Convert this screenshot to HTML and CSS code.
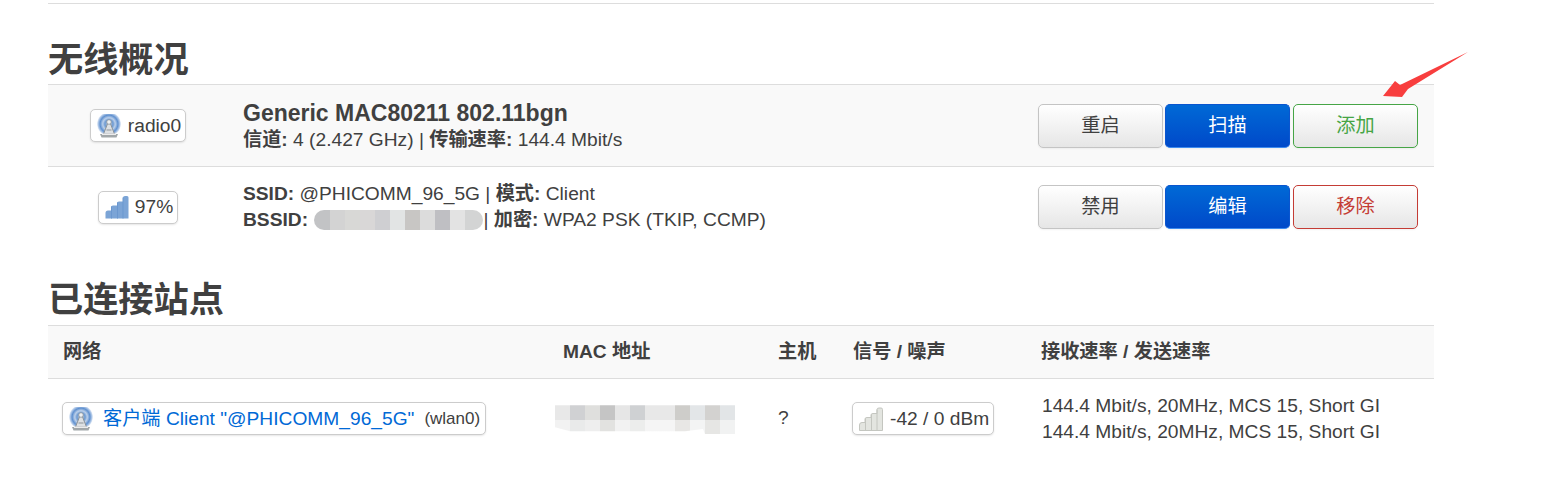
FILE: index.html
```html
<!DOCTYPE html>
<html lang="zh">
<head>
<meta charset="utf-8">
<title>无线概况</title>
<link rel="stylesheet" href="styles.css">
</head>
<body>
<svg class="defs" width="0" height="0" aria-hidden="true">
  <defs>
    <radialGradient id="waves" cx="50%" cy="50%" r="50%">
      <stop offset="0" stop-color="#cfdcee"/>
      <stop offset=".34" stop-color="#6d9ad2"/>
      <stop offset=".52" stop-color="#bcd0ea"/>
      <stop offset=".74" stop-color="#5f90cf"/>
      <stop offset=".9" stop-color="#b0c8e8"/>
      <stop offset="1" stop-color="#b0c8e8" stop-opacity=".2"/>
    </radialGradient>
    <symbol id="radio" viewBox="0 0 24 24">
      <circle cx="12" cy="10" r="12" fill="url(#waves)"/>
      <path d="M12 6 L17.500 20 H6.500 Z" fill="#dde0e3" stroke="#8d9398" stroke-width="1"/>
      <circle cx="12" cy="8" r="2.300" fill="#eef0f2" stroke="#8d9398" stroke-width=".8"/>
      <path d="M9.500 16 H14.500" stroke="#8d9398" stroke-width="1"/>
      <path d="M3 20 H21 L19.500 23.500 H4.500 Z" fill="#a2a7a9"/>
      <rect x="5" y="19.500" width="14" height="1.500" fill="#ececec"/>
    </symbol>
    <symbol id="bars" viewBox="0 0 24 23">
      <path d="M.5 23 V17.500 Q.5 15 3 15 H6 V11.500 Q6 10 8 10 H12 V7.500 Q12 6 14 6 H18 V2 Q18 .5 20 .5 H22 Q23.500 .5 23.500 2 V23 Z"/>
      <path d="M6.500 23 V11 M12.500 23 V7 M18 23 V2" fill="none" stroke="currentColor" stroke-width="1"/>
    </symbol>
  </defs>
</svg>

<main class="page">
  <h2 class="title title-first">无线概况</h2>
  <table class="grid">
    <tr class="row-device">
      <td class="cell-badge">
        <span class="badge"><svg class="ico"><use href="#radio"/></svg>radio0</span>
      </td>
      <td class="cell-info">
        <div class="device">Generic MAC80211 802.11bgn</div>
        <div><b>信道:</b> 4 (2.427 GHz) | <b>传输速率:</b> 144.4 Mbit/s</div>
      </td>
      <td class="cell-actions">
        <div class="actions">
          <button class="btn">重启</button>
          <button class="btn btn-primary">扫描</button>
          <button class="btn btn-add">添加</button>
        </div>
      </td>
    </tr>
    <tr class="row-net">
      <td class="cell-badge">
        <span class="badge"><svg class="ico ico-blue"><use href="#bars"/></svg>97%</span>
      </td>
      <td class="cell-info">
        <div><b>SSID:</b> @PHICOMM_96_5G | <b>模式:</b> Client</div>
        <div><b>BSSID:</b> <span class="blur blur-bssid"></span>| <b>加密:</b> WPA2 PSK (TKIP, CCMP)</div>
      </td>
      <td class="cell-actions">
        <div class="actions">
          <button class="btn">禁用</button>
          <button class="btn btn-primary">编辑</button>
          <button class="btn btn-remove">移除</button>
        </div>
      </td>
    </tr>
  </table>

  <h2 class="title">已连接站点</h2>
  <table class="grid grid-stations">
    <tr class="row-th">
      <th class="c-net">网络</th>
      <th class="c-mac">MAC 地址</th>
      <th class="c-host">主机</th>
      <th class="c-sig">信号 / 噪声</th>
      <th>接收速率 / 发送速率</th>
    </tr>
    <tr class="row-station">
      <td>
        <span class="badge badge-wide"><svg class="ico"><use href="#radio"/></svg><a class="link">客户端 Client "@PHICOMM_96_5G"</a><small class="iface">(wlan0)</small></span>
      </td>
      <td><span class="blur blur-mac"></span></td>
      <td class="host">?</td>
      <td><span class="badge"><svg class="ico ico-gray"><use href="#bars"/></svg>-42 / 0 dBm</span></td>
      <td class="rates">144.4 Mbit/s, 20MHz, MCS 15, Short GI<br>144.4 Mbit/s, 20MHz, MCS 15, Short GI</td>
    </tr>
  </table>
</main>

<svg class="arrow" viewBox="0 0 90 48" aria-hidden="true">
  <polygon points="85,0 25,37 19,45 0,44 12,29 17,33" fill="#f83e3e"/>
</svg>
</body>
</html>
```
FILE: styles.css
```css
* { box-sizing: border-box; }
html, body { margin: 0; background: #fff; }
body {
  position: relative;
  height: 483px;
  overflow: hidden;
  font-family: "Liberation Sans", "Noto Sans CJK SC", sans-serif;
  font-size: 19.2px;
  line-height: 26px;
  color: #404040;
}
.defs { position: absolute; }
.page {
  width: 1386px;
  margin-left: 48px;
  padding-top: 3px;
}
.page::before {
  content: "";
  display: block;
  height: 1px;
  background: #ddd;
}
.title {
  height: 49px;
  margin: 28px 0 0;
  font-size: 35.2px;
  line-height: 47px;
  font-weight: 700;
  color: #404040;
}
.title-first { height: 49px; margin-top: 31px; line-height: 49px; }
.grid {
  width: 100%;
  border-collapse: collapse;
  table-layout: fixed;
  border-top: 1px solid #ddd;
}
.grid td { padding: 0; vertical-align: middle; }
.row-device { height: 82px; background: #f9f9f9; border-bottom: 1px solid #ddd; }
.row-net { height: 81px; }
.grid .cell-badge { width: 184px; text-align: center; padding-right: 4px; }
.grid .cell-info { padding-left: 11px; }
.cell-actions { width: 416px; }
.device { font-size: 23px; font-weight: 700; line-height: 28px; }
.actions { display: flex; gap: 2px; padding-left: 20px; }
.btn {
  width: 125px;
  height: 44px;
  padding: 0;
  border: 1px solid #c4c4c4;
  border-radius: 5px;
  background: linear-gradient(#fff, #e6e6e6);
  box-shadow: 0 1px 2px rgba(0,0,0,.05);
  font: inherit;
  color: #404040;
}
.btn-primary {
  color: #fff;
  border-color: #0a55cf #0a55cf #3d8bef;
  background: linear-gradient(#0069d6, #0049c9);
}
.btn-add { color: #46a546; border-color: #46a546; margin-left: 1px; }
.btn-remove { color: #c43c35; border-color: #c43c35; margin-left: 1px; }
.badge {
  display: inline-flex;
  align-items: center;
  height: 33px;
  padding: 0 4px 0 6px;
  border: 1px solid #ccc;
  border-radius: 5px;
  background: #fff;
  box-shadow: 0 1px 2px rgba(0,0,0,.1);
  white-space: nowrap;
  vertical-align: middle;
}
.ico { width: 24px; height: 24px; margin-right: 7px; flex: none; }
.ico-blue { fill: #7ba4d6; color: #6b97cf; margin-right: 6px; }
.ico-gray { fill: #e3e5e0; color: #c4c6c0; stroke: #c4c6c0; margin-right: 7px; }
.blur { display: inline-block; vertical-align: middle; }
.blur-bssid {
  width: 169px;
  height: 20px;
  border-radius: 10px;
  margin: -2px 0 0 1px;
  background: linear-gradient(90deg,
    #c2c3c5 0 16px, #d3d3d3 16px 31px, #d8d8d6 31px 46px, #d9d7d7 46px 61px,
    #cfcfd2 61px 76px, #e2e4e4 76px 91px, #c8c6c4 91px 106px, #dcdcdc 106px 121px,
    #bfbfc3 121px 136px, #e3e3e3 136px 151px, #d3d4d4 151px 169px);
}
.row-th { height: 53px; background: #f9f9f9; border-bottom: 1px solid #ddd; }
.row-th th { padding: 0 0 0 15px; text-align: left; font-weight: 700; }
.c-net { width: 500px; }
.c-mac { width: 215px; }
.c-host { width: 75px; }
.c-sig { width: 188px; }
.row-station { height: 79px; }
.grid-stations td { padding-left: 14px; }
.grid-stations .host { padding-left: 15px; }
.grid-stations .rates { padding: 2px 0 0 16px; }
.grid-stations .badge { margin-top: 2px; }
.badge-wide .ico { margin-right: 10px; }
.badge-wide { padding-right: 5px; }
.link { color: #0069d6; }
.iface { font-size: 17px; margin-left: 10px; }
.blur-mac {
  width: 180px;
  height: 29px;
  margin: 4px 0 0 -7px;
  clip-path: polygon(0 0, 100% 0, 100% 100%, 150px 100%, 148px 82%, 130px 90%, 15px 90%, 0 76%);
  background:
    linear-gradient(90deg,
      #e8e8e8 0 15px, #d0d1d3 15px 30px, #dfdfdd 30px 45px, #c5c5c5 45px 60px,
      #e6e6e6 60px 75px, #cfd1d3 75px 90px, #e8e8e8 90px 120px, #cecdca 120px 135px,
      #e3e6e8 135px 150px, #d3d2d0 150px 165px, #e2e5e7 165px 180px) top / 100% 15px no-repeat,
    linear-gradient(90deg,
      #f2f2f2 0 15px, #e9eaea 15px 30px, #eeeeee 30px 45px, #e2e2e0 45px 60px,
      #f2f2f2 60px 75px, #ecedec 75px 90px, #f5f5f5 90px 120px, #e8e7e5 120px 135px,
      #f3f4f4 135px 150px, #e6e6e4 150px 165px, #f1f2f2 165px 180px) bottom / 100% 14px no-repeat;
}
.arrow {
  position: absolute;
  left: 1383px;
  top: 52px;
  width: 90px;
  height: 48px;
}
```
